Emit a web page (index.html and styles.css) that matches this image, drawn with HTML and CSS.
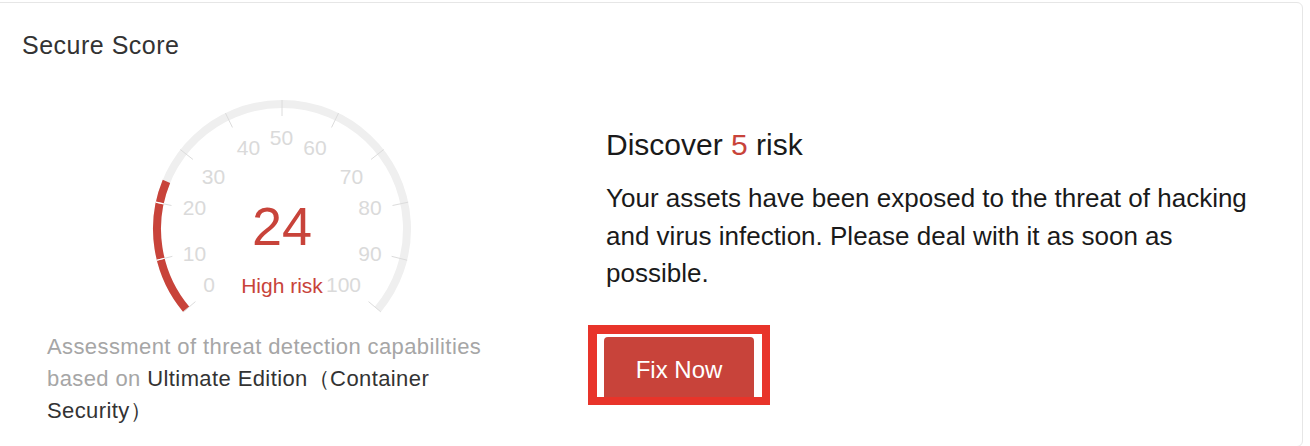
FILE: index.html
```html
<!DOCTYPE html>
<html lang="en">
<head>
    <meta charset="UTF-8">
    <meta name="viewport" content="width=device-width, initial-scale=1.0">
    <title>Secure Score</title>
    <link rel="stylesheet" href="styles.css">
</head>
<body>
<div class="card">
    <h2 class="card-title">Secure Score</h2>
    <div class="score-row">
        <div class="score-left">
            <svg class="gauge" width="300" height="230" viewBox="0 0 300 230">
                <!-- track -->
                <path d="M54.25 215.35 A125 125 0 1 1 245.75 215.35" fill="none" stroke="#efefef" stroke-width="8"/>
                <!-- value 24 -->
                <path d="M54.25 215.35 A125 125 0 0 1 34.44 87.36" fill="none" stroke="#c8433a" stroke-width="8"/>
                <g stroke="#dcdcdc" stroke-width="1">
                    <line x1="51.18" y1="217.92" x2="63.44" y2="207.64"/>
                    <line x1="24.83" y1="166.21" x2="40.36" y2="162.34"/>
                    <line x1="23.82" y1="108.18" x2="39.47" y2="111.51"/>
                    <line x1="48.35" y1="55.58" x2="60.95" y2="65.43"/>
                    <line x1="93.45" y1="19.06" x2="100.46" y2="33.44"/>
                    <line x1="150" y1="6" x2="150" y2="22"/>
                    <line x1="206.55" y1="19.06" x2="199.54" y2="33.44"/>
                    <line x1="251.65" y1="55.58" x2="239.05" y2="65.43"/>
                    <line x1="276.18" y1="108.18" x2="260.53" y2="111.51"/>
                    <line x1="275.17" y1="166.21" x2="259.64" y2="162.34"/>
                    <line x1="248.82" y1="217.92" x2="236.56" y2="207.64"/>
                </g>
                <g stroke="#ffffff" stroke-width="1.2">
                    <line x1="24.83" y1="166.21" x2="32.59" y2="164.27"/>
                    <line x1="23.82" y1="108.18" x2="31.64" y2="109.84"/>
                </g>
                <g class="gauge-labels" text-anchor="middle">
                    <text x="77" y="198">0</text>
                    <text x="62.5" y="167">10</text>
                    <text x="62.5" y="121">20</text>
                    <text x="81.5" y="90">30</text>
                    <text x="116.5" y="61">40</text>
                    <text x="149.5" y="51">50</text>
                    <text x="183" y="61">60</text>
                    <text x="219.5" y="90">70</text>
                    <text x="238" y="121">80</text>
                    <text x="238" y="167">90</text>
                    <text x="211.5" y="198">100</text>
                </g>
                <text class="gauge-value" x="150" y="151" text-anchor="middle">24</text>
                <text class="gauge-level" x="150" y="199" text-anchor="middle">High risk</text>
            </svg>
            <p class="score-desc">Assessment of threat detection capabilities based on <span class="edition">Ultimate Edition（Container Security）</span></p>
        </div>
        <div class="score-right">
            <h3 class="risk-title">Discover <span class="risk-count">5</span> risk</h3>
            <p class="risk-text">Your assets have been exposed to the threat of hacking and virus infection. Please deal with it as soon as possible.</p>
            <div class="fix-wrap">
                <button class="fix-button">Fix Now</button>
            </div>
        </div>
    </div>
</div>
</body>
</html>
```

FILE: styles.css
```css
/* Secure score card */
html, body {
    overflow: hidden;
}

body {
    margin: 0;
    background: #FFFFFF;
    font-family: "Liberation Sans", Arial, sans-serif;
    color: #222222;
}

.card {
    box-sizing: border-box;
    margin: 2px 7px 0 -10px;
    height: 445px;
    padding: 27px 0 0 31px;
    border: 1px solid #e6e6e6;
    border-radius: 6px;
    background: #FFFFFF;
}

.card-title {
    margin: 0;
    font-size: 25px;
    line-height: 30px;
    font-weight: 400;
    letter-spacing: 0.5px;
    color: #333333;
}

.score-row {
    display: flex;
    align-items: flex-start;
    margin-top: 34px;
    margin-left: 25px;
}

.score-left {
    width: 470px;
    flex-shrink: 0;
}

.gauge {
    display: block;
    margin: 0 auto;
}

.gauge-labels {
    font-family: "Liberation Sans", Arial, sans-serif;
    font-size: 21px;
    fill: #dadada;
}

.gauge-value {
    font-family: "Liberation Sans", Arial, sans-serif;
    font-size: 54px;
    fill: #c8433a;
}

.gauge-level {
    font-family: "Liberation Sans", Arial, sans-serif;
    font-size: 21px;
    fill: #c8433a;
}

.score-desc {
    margin: 7px 0 0 0;
    font-size: 22px;
    line-height: 32px;
    letter-spacing: 0.4px;
    color: #a6a6a6;
}

.edition {
    color: #333333;
}

.score-right {
    width: 660px;
    margin-left: 89px;
    padding-top: 31px;
}

.risk-title {
    margin: 0;
    font-size: 30px;
    line-height: 40px;
    font-weight: 400;
    color: #1a1a1a;
}

.risk-count {
    color: #c8433a;
}

.risk-text {
    margin: 15px 0 0 0;
    font-size: 26px;
    line-height: 37.5px;
    color: #1a1a1a;
}

.fix-wrap {
    position: relative;
    width: 150px;
    margin-top: 44px;
    margin-left: -2px;
}

.fix-button {
    display: block;
    width: 150px;
    height: 66px;
    padding: 0;
    border: none;
    border-radius: 4px;
    background: #c8433a;
    color: #FFFFFF;
    font-family: "Liberation Sans", Arial, sans-serif;
    font-size: 24px;
    cursor: pointer;
}

/* highlight frame drawn over the button */
.fix-wrap::after {
    content: "";
    position: absolute;
    box-sizing: border-box;
    left: -16px;
    top: -12px;
    width: 182px;
    height: 80px;
    border-style: solid;
    border-color: #e8342a;
    border-width: 9px 8px 8px 9px;
}
```
